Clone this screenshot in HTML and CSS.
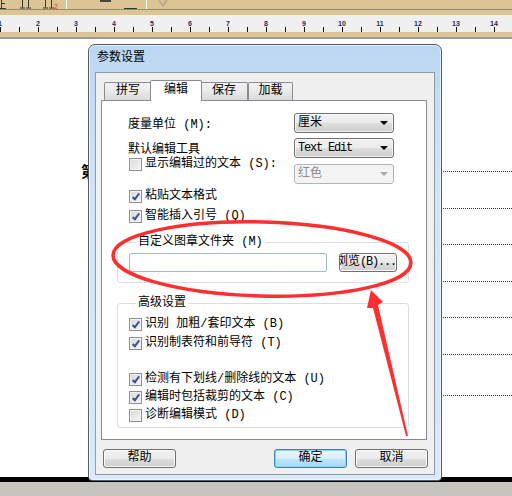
FILE: index.html
```html
<!DOCTYPE html>
<html>
<head>
    <meta charset="UTF-8">
    <title>参数设置</title>
    <link rel="stylesheet" href="styles.css">
</head>
<body>
    <!-- formatting toolbar, only the lower edge of its icons shows -->
    <div class="toolbar">
        <svg class="tool-icons" viewBox="0 0 180 9" width="180" height="9">
            <g stroke="#333" stroke-width="1" fill="none">
                <path d="M1.5 0V8.5M0 8.5H6M1.5 3.5H5"/>
                <path d="M22.5 0V7.5M28.5 0V7.5M20 8H25M26 8H31"/>
                <path d="M45.5 0V7.5M51.5 0V7.5M43 8H48M49 8H54"/>
                <path d="M124 8.5H137"/>
            </g>
            <rect x="100" y="0" width="11" height="2" fill="#444"/>
            <rect x="66" y="0" width="1" height="9" fill="#fff"/>
            <rect x="146" y="0" width="1" height="9" fill="#fff"/>
            <path d="M159 0L163 6L167 0" stroke="#b9a784" stroke-width="1.5" fill="none"/>
            <text x="54" y="8.5" font-family="Liberation Sans, sans-serif" font-size="7" fill="#c0392b">2</text>
        </svg>
    </div>

    <!-- horizontal ruler, 38px per centimetre -->
    <div class="ruler-band">
        <div class="ruler">
            <div class="ruler-nums">
                <span>1</span><span>2</span><span>3</span><span>4</span><span>5</span>
                <span>6</span><span>7</span><span>8</span><span>9</span><span>10</span>
                <span>11</span><span>12</span><span>13</span><span>14</span>
            </div>
            <div class="ticks"></div>
        </div>
    </div>

    <div class="workspace">
        <!-- document page: a table of contents with dotted leaders -->
        <div class="page">
            <div class="toc-row toc-head"><span class="toc-title">第一章</span><span class="leader"></span></div>
            <div class="toc-row"><span class="leader"></span></div>
            <div class="toc-row"><span class="leader"></span></div>
            <div class="toc-row"><span class="leader"></span></div>
            <div class="toc-row"><span class="leader"></span></div>
            <div class="toc-row"><span class="leader"></span></div>
            <div class="toc-row toc-last"><span class="leader"></span></div>
        </div>

        <!-- settings dialog -->
        <div class="dialog">
            <div class="titlebar">参数设置</div>
            <div class="client">
                <div class="tabs">
                    <div class="tab">拼写</div>
                    <div class="tab active">编辑</div>
                    <div class="tab">保存</div>
                    <div class="tab">加载</div>
                </div>

                <div class="panel">
                    <div class="row">
                        <span class="label">度量单位 (M):</span>
                        <div class="select">厘米</div>
                    </div>
                    <div class="row row-2">
                        <span class="label">默认编辑工具</span>
                        <div class="select"><span class="mono">Text Edit</span></div>
                    </div>
                    <div class="row row-3">
                        <label class="check"><span class="cb"></span>显示编辑过的文本 (S):</label>
                        <div class="select disabled">红色</div>
                    </div>
                    <label class="check check-4"><span class="cb on"></span>粘贴文本格式</label>
                    <label class="check check-5"><span class="cb on"></span>智能插入引号 (Q)</label>

                    <fieldset class="group group-folder">
                        <legend>自定义图章文件夹 (M)</legend>
                        <div class="folder-row">
                            <div class="textbox"></div>
                            <div class="btn btn-browse">浏览<span class="mono">(B)...</span></div>
                        </div>
                    </fieldset>

                    <fieldset class="group group-adv">
                        <legend>高级设置</legend>
                        <label class="check adv first"><span class="cb on"></span>识别 加粗/套印文本 (B)</label>
                        <label class="check adv"><span class="cb on"></span>识别制表符和前导符 (T)</label>
                        <div class="adv-blank"></div>
                        <label class="check adv"><span class="cb on"></span>检测有下划线/删除线的文本 (U)</label>
                        <label class="check adv"><span class="cb on"></span>编辑时包括裁剪的文本 (C)</label>
                        <label class="check adv"><span class="cb"></span>诊断编辑模式 (D)</label>
                    </fieldset>
                </div>

                <div class="actions">
                    <div class="btn">帮助</div>
                    <div class="btn default push">确定</div>
                    <div class="btn">取消</div>
                </div>
            </div>
        </div>
    </div>
    <div class="desk"></div>

    <!-- red pen markup drawn over the screen -->
    <svg class="markup" viewBox="0 0 512 496" width="512" height="496">
        <ellipse cx="262" cy="259" rx="149" ry="37" transform="rotate(1.5 262 259)"
                 fill="none" stroke="#ff2f2f" stroke-width="3.5"/>
        <polygon points="371,290 383,302 378,305 408,436 406,436 373,308 367,308" fill="#ff2f2f"/>
    </svg>
</body>
</html>
```

FILE: styles.css
```css
/* page frame */
body {
    margin: 0;
    width: 512px;
    height: 496px;
    overflow: hidden;
    position: relative;
    font-family: "Liberation Mono", "Noto Sans CJK SC", monospace;
    font-size: 12px;
    color: #000;
    background: #c5c4bf;
}

/* toolbar */
.toolbar {
    height: 9px;
    overflow: hidden;
    background: #dcc494;
    border-bottom: 1px solid #8e8a80;
}

.tool-icons {
    display: block;
}

/* ruler */
.ruler-band {
    background: #dcc494;
    padding: 5px 0;
    border-bottom: 2px solid #a09c94;
}

.ruler {
    height: 17px;
    background: #f0f0f0;
    display: flex;
    flex-direction: column;
    justify-content: space-between;
    overflow: hidden;
}

.ruler-nums {
    display: flex;
    margin-left: -19px;
    padding-top: 5px;
}

.ruler-nums span {
    flex: 0 0 38px;
    text-align: center;
    font-family: "Liberation Sans", sans-serif;
    font-size: 7px;
    font-weight: bold;
    line-height: 7px;
    color: #1f2b5c;
}

.ticks {
    height: 5px;
    background: repeating-linear-gradient(to right, #111 0 1px, transparent 1px 19px);
}

/* document area */
.workspace {
    position: relative;
    height: 438px;
    background: #fff;
    border-bottom: 5px solid #000;
}

.page {
    padding-top: 97px;
}

.toc-row {
    display: flex;
    align-items: flex-end;
    height: 36px;
    padding-left: 120px;
}

.toc-row:nth-child(even) { height: 37px; }
.toc-row.toc-last { height: 41px; }
.toc-row.toc-head { padding-left: 81px; }

.toc-title {
    font-family: "Noto Sans CJK SC", sans-serif;
    font-size: 15px;
    font-weight: bold;
    line-height: 15px;
    margin-bottom: -6px;
    margin-right: 8px;
}

.leader {
    flex: 1;
    border-bottom: 1px dotted #333;
}

.desk {
    height: 14px;
}

/* dialog window */
.dialog {
    position: absolute;
    left: 88px;
    top: 5px;
    width: 354px;
    height: 437px;
    box-sizing: border-box;
    display: flex;
    flex-direction: column;
    padding: 0 6px 5px;
    border: 1px solid #565c63;
    border-radius: 7px 7px 4px 4px;
    background: linear-gradient(to bottom, #bcd7f3, #d2e5f8 35%, #dae9f9);
    box-shadow: inset 0 0 0 1px rgba(255, 255, 255, 0.55);
}

.titlebar {
    height: 27px;
    line-height: 27px;
    padding-left: 2px;
}

.client {
    flex: 1;
    display: flex;
    flex-direction: column;
    padding: 7px 7px 6px 5px;
    border: 1px solid #8e9aa7;
    background: #f0f0f0;
}

/* tabs */
.tabs {
    display: flex;
    align-items: flex-end;
    height: 20px;
    padding-left: 3px;
}

.tab {
    width: 48px;
    height: 18px;
    box-sizing: border-box;
    border: 1px solid #898c95;
    border-bottom: none;
    border-radius: 2px 2px 0 0;
    background: linear-gradient(to bottom, #f3f3f3, #e9e9e9 50%, #d9d9d9);
    text-align: center;
    line-height: 17px;
}

.tab:last-child { width: 45px; }

.tab.active {
    position: relative;
    z-index: 1;
    width: 52px;
    height: 21px;
    margin: 0 -2px -1px;
    background: #fff;
    line-height: 19px;
}

.panel {
    flex: 1;
    padding: 12px 17px 0 15px;
    border: 1px solid #898c95;
    background: #fff;
}

/* rows with drop-downs */
.row {
    display: flex;
    align-items: center;
    justify-content: space-between;
    height: 20px;
    padding: 0 15px 0 11px;
}

.row-2 { margin-top: 5px; }

.row-3 {
    align-items: flex-start;
    height: 26px;
    padding-left: 12px;
}

.row-3 .select { margin-top: 6px; }

.select {
    display: flex;
    align-items: center;
    width: 100px;
    height: 20px;
    box-sizing: border-box;
    padding: 0 5px 0 3px;
    border: 1px solid #707070;
    border-radius: 3px;
    background: linear-gradient(to bottom, #f2f2f2, #ebebeb 50%, #dddddd 51%, #cfcfcf);
    box-shadow: inset 0 0 0 1px rgba(255, 255, 255, 0.7);
    line-height: 18px;
}

.select::after {
    content: "";
    margin-left: auto;
    border-left: 4px solid transparent;
    border-right: 4px solid transparent;
    border-top: 4px solid #000;
}

.select.disabled {
    border-color: #b0b5b9;
    background: #f4f4f4;
    box-shadow: none;
    color: #8d8d8d;
}

.select.disabled::after { border-top-color: #a8a8a8; }

.mono { letter-spacing: -1.2px; }

/* check boxes */
.check {
    display: flex;
    align-items: center;
    height: 13px;
    line-height: 13px;
    white-space: nowrap;
}

.check-4 { margin: 6px 0 0 12px; }
.check-5 { margin: 7px 0 0 12px; }

.cb {
    position: relative;
    flex: 0 0 13px;
    height: 13px;
    box-sizing: border-box;
    margin-right: 3px;
    border: 1px solid #8f8f8f;
    background: linear-gradient(135deg, #d8d8d8, #f7f7f7);
    box-shadow: inset 0 0 0 1px #f2f2f2;
}

.cb.on::after {
    content: "";
    position: absolute;
    left: 4px;
    top: 1px;
    width: 2px;
    height: 6px;
    border-right: 2px solid #3c5490;
    border-bottom: 2px solid #3c5490;
    transform: rotate(38deg);
}

/* group boxes */
.group {
    margin: 0;
    padding: 5px 11px 10px;
    border: 1px solid #d5dfe5;
    border-radius: 3px;
}

.group legend {
    margin-left: 7px;
    padding: 0 2px;
    line-height: 12px;
}

.group-folder { margin-top: 13px; }

.group-adv {
    margin-top: 14px;
    padding: 9px 11px 0;
}

.folder-row {
    display: flex;
    gap: 12px;
}

.textbox {
    flex: 1;
    height: 19px;
    box-sizing: border-box;
    border: 1px solid #a0bad3;
    border-radius: 2px;
    background: #fff;
}

.check.adv {
    align-items: flex-start;
    height: 18px;
}

.check.adv.first { height: 19px; }

.adv-blank { height: 18px; }

/* push buttons */
.actions {
    display: flex;
    gap: 8px;
    margin: 9px -1px 0 2px;
}

.btn {
    display: flex;
    align-items: center;
    justify-content: center;
    width: 73px;
    height: 19px;
    box-sizing: border-box;
    border: 1px solid #707070;
    border-radius: 3px;
    background: linear-gradient(to bottom, #f2f2f2, #ebebeb 50%, #dddddd 51%, #cfcfcf);
    box-shadow: inset 0 0 0 1px #fbfbfb;
    line-height: 17px;
}

.btn.default {
    border-color: #3c7fb1;
    background: linear-gradient(to bottom, #eaf6fd, #d9f0fc 50%, #bee6fd 51%, #a7d9f5);
    box-shadow: inset 0 0 0 1px #8fd2f3;
}

.btn.push { margin-left: auto; }

.btn-browse {
    flex: 0 0 58px;
    justify-content: flex-end;
    padding-right: 0;
    overflow: hidden;
    white-space: nowrap;
}

/* pen markup layer */
.markup {
    position: absolute;
    left: 0;
    top: 0;
    pointer-events: none;
}
```
